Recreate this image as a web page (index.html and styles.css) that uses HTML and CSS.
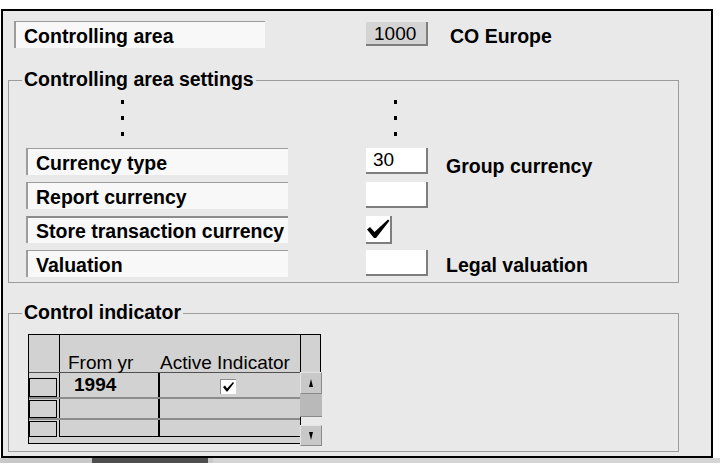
FILE: index.html
```html
<!DOCTYPE html>
<html>
<head>
<meta charset="utf-8">
<link rel="stylesheet" href="styles.css">
</head>
<body>
<div class="window">
  <div class="top-row">
    <div class="label label-top">Controlling area</div>
    <div class="key-field">1000</div>
    <div class="desc desc-top">CO Europe</div>
  </div>

  <fieldset class="group group-settings">
    <legend>Controlling area settings</legend>
    <div class="dots-row">
      <div class="dots"><span class="dot"></span><span class="dot"></span><span class="dot"></span></div>
      <div class="dots dots-right"><span class="dot"></span><span class="dot"></span><span class="dot"></span></div>
    </div>
    <div class="srow">
      <div class="label">Currency type</div>
      <div class="field">30</div>
      <div class="desc desc-low">Group currency</div>
    </div>
    <div class="srow">
      <div class="label">Report currency</div>
      <div class="field"></div>
    </div>
    <div class="srow">
      <div class="label label-focus">Store transaction currency</div>
      <div class="check">
        <svg width="26" height="26" viewBox="0 0 26 26"><polygon points="1,12.5 4,10 8.5,15 22,2.5 23.5,3.8 10,21 8,21" fill="#000"/></svg>
      </div>
    </div>
    <div class="srow">
      <div class="label">Valuation</div>
      <div class="field"></div>
      <div class="desc">Legal valuation</div>
    </div>
  </fieldset>

  <fieldset class="group group-control">
    <legend>Control indicator</legend>
    <div class="tbl">
      <div class="tmain">
        <div class="thead">
          <div class="hsel"></div>
          <div class="hcell hcol1">From yr</div>
          <div class="hcell hcol2">Active Indicator</div>
        </div>
        <div class="trow trow1">
          <div class="tsel"><span class="selbox sel1"></span></div>
          <div class="tcell tcol1 strong">1994</div>
          <div class="tcell tcol2"><span class="minicheck"><svg width="13" height="12" viewBox="0 0 13 12"><polygon points="1,6 3,4.5 5,7.5 11,1 12,2 5.5,10.5 4.5,10.5" fill="#000"/></svg></span></div>
        </div>
        <div class="trow trow2">
          <div class="tsel"><span class="selbox sel2"></span></div>
          <div class="tcell tcol1"></div>
          <div class="tcell tcol2"></div>
        </div>
        <div class="trow trow3">
          <div class="tsel"><span class="selbox sel3"></span></div>
          <div class="tcell tcol1 last"></div>
          <div class="tcell tcol2 last"></div>
        </div>
      </div>
      <div class="scroll">
        <div class="sc-head"></div>
        <div class="sc-btn sc-up"><span class="tri-up"></span></div>
        <div class="sc-track"></div>
        <div class="sc-gap"></div>
        <div class="sc-btn sc-down"><span class="tri-down"></span></div>
      </div>
    </div>
  </fieldset>
</div>
<div class="taskbar"><span class="task-dark"></span><span class="task-mid"></span></div>
</body>
</html>
```

FILE: styles.css
```css
* { box-sizing: border-box; }

html, body {
  margin: 0;
  padding: 0;
  background: #ffffff;
  font-family: "Liberation Sans", Arial, sans-serif;
  color: #000;
  overflow: hidden;
}

.window {
  margin: 9px 0 0 1px;
  width: 712px;
  height: 449px;
  border: 2px solid #000;
  background: #e9e9e9;
  overflow: hidden;
}

.label {
  width: 262px;
  height: 27px;
  background: #f8f8f8;
  border-top: 1px solid #9c9c9c;
  border-left: 2px solid #9c9c9c;
  padding: 2px 0 0 8px;
  font-size: 19.5px;
  line-height: 24px;
  font-weight: bold;
  white-space: nowrap;
}

.label-focus {
  border-top: 2px solid #8c8c8c;
  padding-top: 1px;
}

.top-row {
  display: flex;
  align-items: flex-start;
  margin: 10px 0 0 11px;
  height: 27px;
}

.label-top {
  width: 251px;
  padding-left: 8px;
}

.key-field {
  margin: 1px 0 0 101px;
  width: 62px;
  height: 24px;
  background: #d4d4d4;
  border-right: 2px solid #7e7e7e;
  border-bottom: 2px solid #7e7e7e;
  padding: 1px 0 0 8px;
  font-size: 19px;
  line-height: 22px;
}

.desc {
  margin-left: 18px;
  padding-top: 3px;
  font-size: 19.5px;
  line-height: 24px;
  font-weight: bold;
  white-space: nowrap;
}

.desc-top {
  margin-left: 22px;
  padding-top: 3px;
}

.desc-low {
  padding-top: 6px;
}

.group {
  margin: 0;
  padding: 0;
  width: 671px;
  border: 1px solid #9c9c9c;
  min-inline-size: 0;
}

.group legend {
  margin-left: 13px;
  padding: 0 2px 3px 2px;
  font-size: 19.5px;
  line-height: 20px;
  font-weight: bold;
}

.group-settings {
  margin: 21px 0 0 5px;
  padding-bottom: 5px;
}

.group-control {
  margin: 19px 0 0 5px;
  padding-bottom: 5px;
}

.dots-row {
  display: flex;
  margin: 8px 0 0 112px;
}

.dots {
  display: flex;
  flex-direction: column;
  gap: 12px;
}

.dots-right {
  margin-left: 270px;
}

.dot {
  display: block;
  width: 3px;
  height: 4px;
  background: #000;
}

.srow {
  display: flex;
  align-items: flex-start;
  height: 27px;
  margin: 7px 0 0 17px;
}

.dots-row + .srow {
  margin-top: 12px;
}

.field {
  margin-left: 78px;
  width: 62px;
  height: 26px;
  background: #fff;
  border-right: 2px solid #7e7e7e;
  border-bottom: 2px solid #7e7e7e;
  padding: 1px 0 0 7px;
  font-size: 19px;
  line-height: 22px;
}

.check {
  margin-left: 78px;
  width: 26px;
  height: 28px;
  background: #fff;
  border-right: 2px solid #7e7e7e;
  border-bottom: 2px solid #7e7e7e;
  padding-top: 1px;
}

.check svg { display: block; }

/* table */
.tbl {
  display: flex;
  align-items: flex-start;
  margin: 9px 0 0 19px;
}

.tmain {
  width: 273px;
  height: 110px;
  border: 1px solid #000;
  background: #d2d2d2;
}

.thead {
  display: grid;
  grid-template-columns: 30px 100px 141px;
  height: 38px;
  border-bottom: 1px solid #505050;
}

.hcell {
  font-size: 19px;
  line-height: 19px;
  padding-top: 18px;
  white-space: nowrap;
  border-left: 1px solid #000;
}

.hcol1 { padding-left: 8px; }
.hcol2 { padding-left: 2px; border-left: 0; margin-left: -1px; }

.trow {
  display: grid;
  grid-template-columns: 30px 100px 141px;
}

.trow1 { height: 26px; border-bottom: 2px solid #8c8c8c; }
.trow2 { height: 21px; border-bottom: 2px solid #8c8c8c; }
.trow3 { height: 17px; }

.selbox {
  display: block;
  width: 28px;
  border: 1px solid #000;
}

.sel1 { margin-top: 5px; height: 19px; }
.sel2 { margin-top: 1px; height: 18px; }
.sel3 { margin-top: 1px; height: 16px; }

.tcell {
  border-left: 1px solid #000;
}

.tcol2 { border-left: 2px solid #000; margin-left: -1px; }

.tcell.last { border-bottom: 1px solid #000; }

.strong {
  font-size: 19px;
  font-weight: bold;
  line-height: 24px;
  padding-left: 14px;
}

.minicheck {
  display: block;
  margin: 6px 0 0 60px;
  width: 16px;
  height: 15px;
  background: #fff;
  border-top: 1px solid #8c8c8c;
  border-left: 1px solid #8c8c8c;
  padding: 1px 0 0 1px;
}

.minicheck svg { display: block; }

.scroll {
  margin-left: -1px;
  width: 22px;
}

.sc-head {
  width: 21px;
  height: 38px;
  background: #d2d2d2;
  border-top: 1px solid #000;
  border-right: 1px solid #000;
  border-left: 1px solid #000;
}

.sc-btn {
  display: flex;
  align-items: center;
  justify-content: center;
  width: 22px;
  background: #c8c8c8;
  border-top: 1px solid #e4e4e4;
  border-left: 1px solid #e4e4e4;
  border-right: 1px solid #8a8a8a;
  border-bottom: 1px solid #8a8a8a;
}

.sc-up { height: 22px; }
.sc-down { height: 21px; }

.sc-track {
  width: 22px;
  height: 23px;
  background: #b9b9b9;
  border-bottom: 1px solid #8a8a8a;
}

.sc-gap { height: 8px; }

.tri-up {
  width: 0;
  height: 0;
  border-left: 2px solid transparent;
  border-right: 2px solid transparent;
  border-bottom: 8px solid #000;
}

.tri-down {
  width: 0;
  height: 0;
  border-left: 2px solid transparent;
  border-right: 2px solid transparent;
  border-top: 8px solid #000;
}

.taskbar {
  display: flex;
  height: 6px;
  background: #c8c8c8;
}

.task-dark {
  margin-left: 92px;
  width: 116px;
  background: #4e4e4e;
}

.task-mid {
  margin-left: 5px;
  flex: 1;
  background: #d4d4d4;
}
```
